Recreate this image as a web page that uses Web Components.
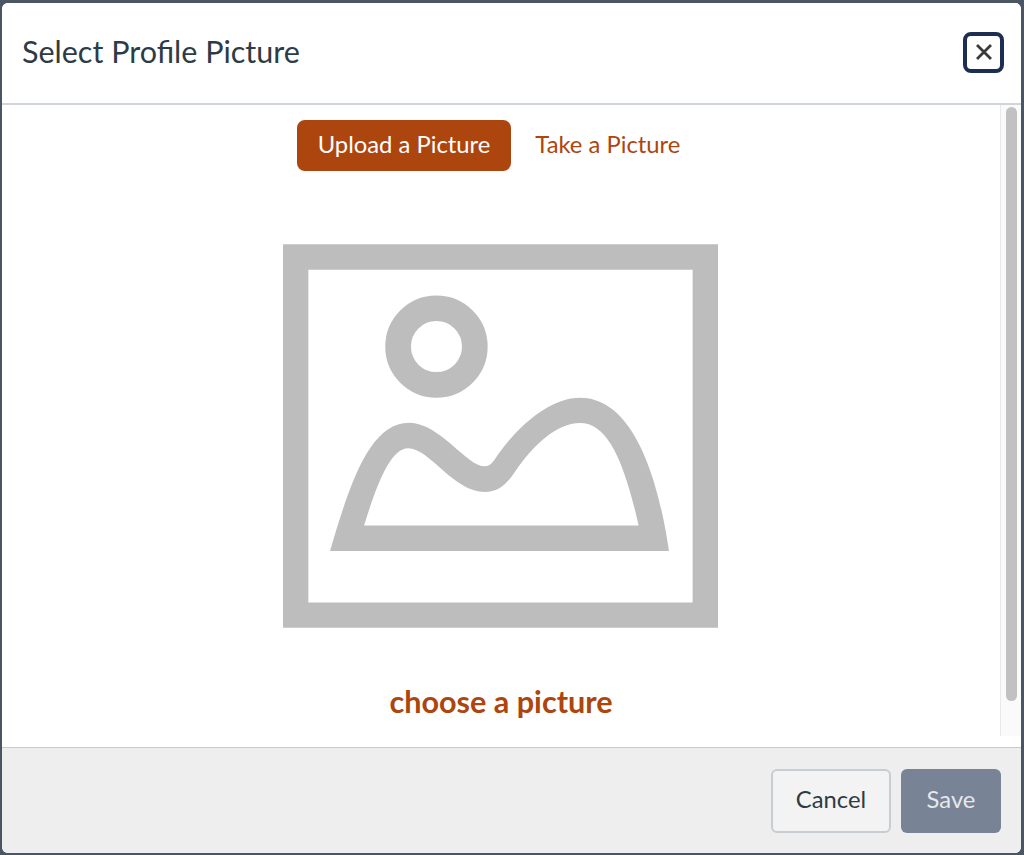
<!DOCTYPE html>
<html>
<head>
<meta charset="utf-8">
<title>Select Profile Picture</title>
<style>
    html, body { margin: 0; height: 100%; }
    body { background-color: #4a5662; font-family: Lato, sans-serif; overflow: hidden; }
</style>
</head>
<body>
<profile-dialog>
    <dialog-header slot="header">Select Profile Picture</dialog-header>
    <picture-tabs slot="tabs"></picture-tabs>
    <picture-chooser slot="chooser">choose a picture</picture-chooser>
    <dialog-footer slot="footer"></dialog-footer>
</profile-dialog>
<script>
class ProfileDialog extends HTMLElement {
    constructor() {
        super();
        this.attachShadow({mode:'open'}).innerHTML = `
<style>
    :host {
        display: flex;
        flex-direction: column;
        box-sizing: border-box;
        width: 1019px;
        height: 850px;
        margin: 3px 0 0 2px;
        background-color: #fff;
        border-radius: 6px;
        overflow: hidden;
    }
    .body { flex: 1; display: flex; min-height: 0; }
    .content { flex: 1; min-width: 0; }
    .track {
        box-sizing: border-box;
        width: 21px;
        height: 631px;
        padding: 2px 4px 0 5px;
        background-color: #fafafa;
        border-left: 1px solid #e8e8e8;
    }
    .thumb { height: 594px; background-color: #c1c1c1; border-radius: 6px; }
</style>
<slot name="header"></slot>
<div class="body">
    <div class="content">
        <slot name="tabs"></slot>
        <slot name="chooser"></slot>
    </div>
    <div class="track"><div class="thumb"></div></div>
</div>
<slot name="footer"></slot>`;
    }
}

class DialogHeader extends HTMLElement {
    constructor() {
        super();
        this.attachShadow({mode:'open'}).innerHTML = `
<style>
    :host {
        display: flex;
        align-items: center;
        justify-content: space-between;
        box-sizing: border-box;
        height: 102px;
        padding: 0 17px 2px 20px;
        border-bottom: 2px solid #d0d5d9;
        color: #2d3b45;
        font-size: 30.5px;
        background-color: #fff;
    }
    .title { margin-top: -3px; }
    button {
        display: flex;
        align-items: center;
        justify-content: center;
        box-sizing: border-box;
        width: 41px;
        height: 41px;
        padding: 0;
        background: none;
        border: 4px solid #1c2f52;
        border-radius: 8px;
    }
</style>
<div class="title"><slot></slot></div>
<button aria-label="Close">
    <svg width="18" height="18" viewBox="0 0 18 18"><path d="M2 2L16 16M16 2L2 16" stroke="#3a3a3a" stroke-width="2.8" fill="none"/></svg>
</button>`;
    }
}

class PictureTabs extends HTMLElement {
    constructor() {
        super();
        this.attachShadow({mode:'open'}).innerHTML = `
<style>
    :host {
        display: flex;
        justify-content: center;
        gap: 3px;
        padding: 15px 4px 0 0;
        font-size: 23.8px;
    }
    button {
        box-sizing: border-box;
        height: 51px;
        padding: 0 21px 3px;
        border: 0;
        border-radius: 8px;
        font: inherit;
        background: none;
        color: #ad450f;
    }
    .active { background-color: #ad450f; color: #fff; }
</style>
<button class="active">Upload a Picture</button>
<button>Take a Picture</button>`;
    }
}

class PictureChooser extends HTMLElement {
    constructor() {
        super();
        this.attachShadow({mode:'open'}).innerHTML = `
<style>
    :host {
        display: flex;
        flex-direction: column;
        align-items: center;
        padding-top: 73px;
        color: #ad450f;
        font-size: 30.6px;
        font-weight: 700;
    }
    svg { display: block; margin: 0 1px 56px 0; }
    .label { line-height: 36px; }
</style>
<svg width="435" height="384" viewBox="40 42 1304 1150">
    <path fill="#bdbdbd" fill-rule="evenodd" d="M40 42H1344V1192H40ZM116 119V1116H1268V119Z"/>
    <circle cx="500" cy="349" r="115" fill="none" stroke="#bdbdbd" stroke-width="77"/>
    <path fill="#bdbdbd" fill-rule="evenodd" d="M181 962C240 760 300 577 418 577C510 577 590 708 645 708C665 708 672 690 690 665C760 570 850 502 930 502C1090 502 1165 740 1197 962ZM283 885H1106C1060 680 1010 578 930 578C860 578 790 645 735 725C710 762 685 785 645 785C550 785 480 654 415 654C365 654 325 750 283 885Z"/>
</svg>
<div class="label"><slot></slot></div>`;
    }
}

class DialogFooter extends HTMLElement {
    constructor() {
        super();
        this.attachShadow({mode:'open'}).innerHTML = `
<style>
    :host {
        display: flex;
        justify-content: flex-end;
        gap: 10px;
        box-sizing: border-box;
        height: 106px;
        padding: 21px 20px 0 0;
        background-color: #eee;
        border-top: 1px solid #c5cbd0;
    }
    button {
        box-sizing: border-box;
        height: 64px;
        padding: 0 0 5px;
        border-radius: 6px;
        font: 23.8px Lato, sans-serif;
    }
    .cancel { width: 120px; background-color: #f3f3f3; border: 2px solid #c7cdd1; color: #2d3b45; }
    .save { width: 100px; background-color: #798396; border: 0; color: #e6e8ec; }
</style>
<button class="cancel">Cancel</button>
<button class="save">Save</button>`;
    }
}

customElements.define('profile-dialog', ProfileDialog);
customElements.define('dialog-header', DialogHeader);
customElements.define('picture-tabs', PictureTabs);
customElements.define('picture-chooser', PictureChooser);
customElements.define('dialog-footer', DialogFooter);
</script>
</body>
</html>
